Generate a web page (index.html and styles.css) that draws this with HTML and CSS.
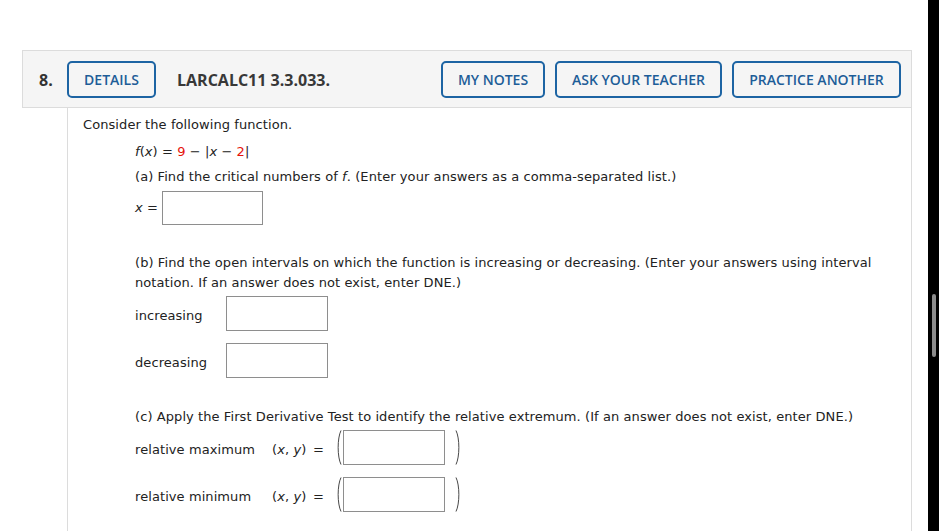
FILE: index.html
```html
<!DOCTYPE html>
<html lang="en">
<head>
<meta charset="utf-8">
<title>LARCALC11 3.3.033.</title>
<link rel="stylesheet" href="styles.css">
</head>
<body>
<div class="page">
  <div class="main">
    <div class="qhead">
      <span class="qnum">8.</span>
      <button class="btn btn-details">DETAILS</button>
      <span class="qref">LARCALC11 3.3.033.</span>
      <div class="actions">
        <button class="btn">MY NOTES</button>
        <button class="btn">ASK YOUR TEACHER</button>
        <button class="btn">PRACTICE ANOTHER</button>
      </div>
    </div>
    <div class="qbody">
      <p class="intro">Consider the following function.</p>
      <div class="indent">
        <p class="math-line"><i>f</i>(<i>x</i>) = <span class="red">9</span> − |<i>x</i> − <span class="red">2</span>|</p>
        <p class="part part-a">(a) Find the critical numbers of <i>f</i>. (Enter your answers as a comma-separated list.)</p>
        <div class="row row-a">
          <span class="lbl-x"><i>x</i> =</span>
          <span class="box"></span>
        </div>
        <p class="part part-b">(b) Find the open intervals on which the function is increasing or decreasing. (Enter your answers using interval notation. If an answer does not exist, enter DNE.)</p>
        <div class="row row-inc">
          <span class="lbl">increasing</span>
          <span class="box"></span>
        </div>
        <div class="row row-dec">
          <span class="lbl">decreasing</span>
          <span class="box"></span>
        </div>
        <p class="part part-c">(c) Apply the First Derivative Test to identify the relative extremum. (If an answer does not exist, enter DNE.)</p>
        <div class="row row-max">
          <span class="lbl lbl-wide">relative maximum</span>
          <span class="pair">(<i>x</i>, <i>y</i>)</span>
          <span class="eq">=</span>
          <svg class="paren" width="6" height="35" viewBox="0 0 6 35"><path d="M5 0.5 C1.2 8 1.2 27 5 34.5" fill="none" stroke="#333" stroke-width="0.9"/></svg>
          <span class="box box-pt"></span>
          <svg class="paren paren-r" width="6" height="35" viewBox="0 0 6 35"><path d="M1 0.5 C4.8 8 4.8 27 1 34.5" fill="none" stroke="#333" stroke-width="0.9"/></svg>
        </div>
        <div class="row row-min">
          <span class="lbl lbl-wide">relative minimum</span>
          <span class="pair">(<i>x</i>, <i>y</i>)</span>
          <span class="eq">=</span>
          <svg class="paren" width="6" height="35" viewBox="0 0 6 35"><path d="M5 0.5 C1.2 8 1.2 27 5 34.5" fill="none" stroke="#333" stroke-width="0.9"/></svg>
          <span class="box box-pt"></span>
          <svg class="paren paren-r" width="6" height="35" viewBox="0 0 6 35"><path d="M1 0.5 C4.8 8 4.8 27 1 34.5" fill="none" stroke="#333" stroke-width="0.9"/></svg>
        </div>
      </div>
    </div>
  </div>
  <div class="scrollbar"><div class="thumb"></div></div>
</div>
</body>
</html>
```

FILE: styles.css
```css
html, body {
  margin: 0;
  padding: 0;
  background: #fff;
}
.page {
  display: flex;
  width: 939px;
  height: 531px;
  overflow: hidden;
}
.main {
  flex: 1;
  padding: 50px 16px 0 22px;
  min-width: 0;
}
.scrollbar {
  width: 11px;
  flex: none;
  background: #000;
}
.thumb {
  margin: 294px 0 0 4px;
  width: 4px;
  height: 63px;
  border-radius: 2px;
  background: #8c8c8c;
}
.qhead {
  display: flex;
  align-items: center;
  height: 58px;
  box-sizing: border-box;
  padding: 10px 10px 9px 16px;
  background: #f5f5f5;
  border: 1px solid #dcdcdc;
  font-family: "Open Sans", "Liberation Sans", sans-serif;
}
.qnum {
  font-size: 16px;
  font-weight: 700;
  color: #333;
  width: 28px;
}
.qref {
  font-size: 16px;
  font-weight: 700;
  color: #383838;
  margin-left: 21px;
}
.btn {
  font-family: "Open Sans", "Liberation Sans", sans-serif;
  font-size: 14px;
  font-weight: 600;
  color: #1d5d98;
  background: #f5f5f5;
  border: 2px solid #1d64a3;
  border-radius: 5px;
  height: 37px;
  padding: 0 15px;
  box-sizing: border-box;
  cursor: pointer;
}
.btn-details {
  width: 89px;
  padding: 0;
}
.actions {
  margin-left: auto;
  display: flex;
  gap: 10px;
}
.actions .btn:nth-child(1) { width: 104px; padding: 0; }
.actions .btn:nth-child(2) { width: 167px; padding: 0; }
.actions .btn:nth-child(3) { width: 169px; padding: 0; }

.qbody {
  margin-left: 45px;
  border-left: 1px solid #dcdcdc;
  border-right: 1px solid #dcdcdc;
  padding: 7px 15px 40px 15px;
  font-family: "DejaVu Sans", Verdana, sans-serif;
  font-size: 13px;
  letter-spacing: 0.08px;
  line-height: 20px;
  color: #222;
}
.qbody p {
  margin: 0;
}
.indent {
  padding-left: 52px;
}
.math-line {
  margin-top: 7px !important;
}
.red {
  color: #e5130b;
}
.part-a { margin-top: 5px !important; }
.part-b { margin-top: 28px !important; }
.part-c { margin-top: 29px !important; }
.row {
  display: flex;
  align-items: center;
}
.row-a { margin-top: 4px; }
.row-inc { margin-top: 3px; }
.row-dec { margin-top: 12px; }
.row-max { margin-top: 3px; }
.row-min { margin-top: 12px; }
.lbl-x {
  width: 27px;
  flex: none;
}
.lbl {
  width: 91px;
  flex: none;
  padding-top: 4px;
}
.lbl-wide {
  width: 137px;
}
.box {
  display: block;
  width: 102px;
  height: 35px;
  box-sizing: border-box;
  border: 1px solid #8e8e8e;
  background: #fff;
  flex: none;
}
.row-a .box {
  width: 101px;
  height: 34px;
}
.pair {
  width: 41px;
  flex: none;
  padding-top: 4px;
}
.eq {
  width: 23px;
  flex: none;
  padding-top: 4px;
}
.paren {
  display: block;
  flex: none;
  margin-right: 1px;
}
.paren-r {
  margin-left: 10px;
}
```
